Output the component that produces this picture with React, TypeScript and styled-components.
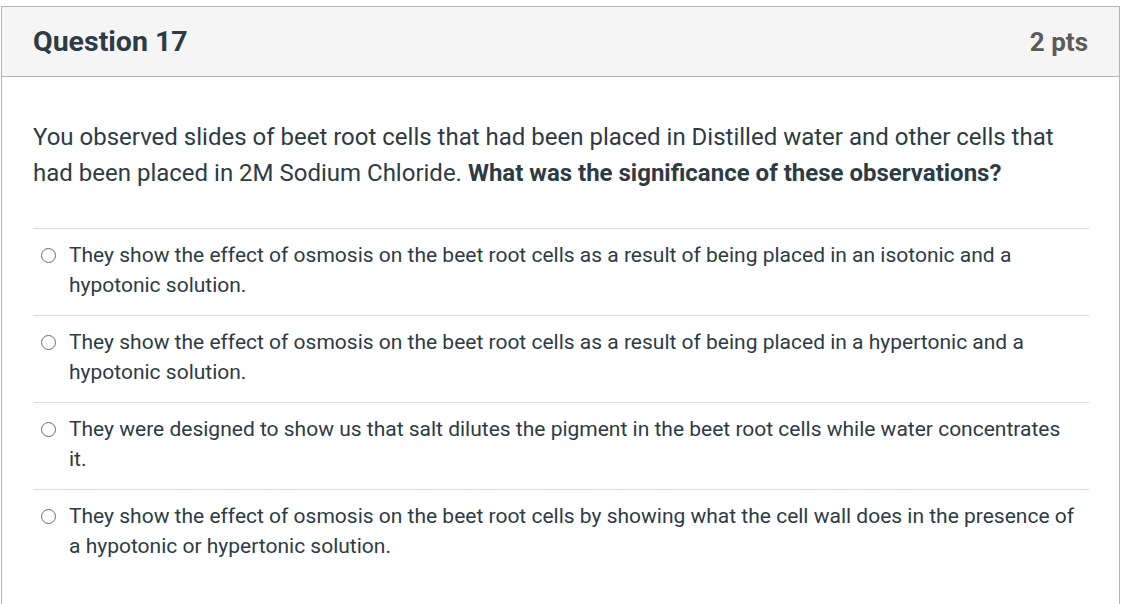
import styled, { createGlobalStyle } from 'styled-components';

const GlobalStyle = createGlobalStyle`
  html, body {
    margin: 0;
    padding: 0;
    background: #ffffff;
  }
  body {
    font-family: Roboto, "Noto Sans", "Liberation Sans", sans-serif;
    color: #2d3b45;
    overflow: hidden;
  }
`;

const Page = styled.div`
  padding: 6px 2px 0 1px;
`;

const Card = styled.div`
  border: 1px solid #b5b5b5;
  border-bottom: none;
  background: #ffffff;
`;

const Header = styled.div`
  display: flex;
  align-items: center;
  justify-content: space-between;
  height: 69px;
  padding: 0 31px;
  background: #f5f5f5;
  border-bottom: 1px solid #b5b5b5;
`;

const Title = styled.h2`
  margin: 0;
  font-size: 28.5px;
  font-weight: 700;
  color: #2d3b45;
`;

const Points = styled.div`
  font-size: 26px;
  font-weight: 700;
  color: #5b5b5b;
`;

const Body = styled.div`
  padding: 42px 30px 80px 31px;
`;

const QuestionText = styled.p`
  margin: 0 0 37px;
  font-size: 24px;
  line-height: 36px;
  color: #2d3b45;
`;

const Answers = styled.div`
  display: flex;
  flex-direction: column;
`;

const Answer = styled.label`
  display: flex;
  align-items: flex-start;
  gap: 13px;
  padding: 11px 10px 15px 8px;
  border-top: 1px solid #dcdcdc;
  font-size: 21px;
  line-height: 30px;
  color: #2d3b45;
  cursor: pointer;
`;

const Radio = styled.span`
  flex: none;
  width: 13px;
  height: 13px;
  margin-top: 8px;
  border: 1.5px solid #6b6b6b;
  border-radius: 50%;
  background: #ffffff;
`;

const answers = [
  'They show the effect of osmosis on the beet root cells as a result of being placed in an isotonic and a hypotonic solution.',
  'They show the effect of osmosis on the beet root cells as a result of being placed in a hypertonic and a hypotonic solution.',
  'They were designed to show us that salt dilutes the pigment in the beet root cells while water concentrates it.',
  'They show the effect of osmosis on the beet root cells by showing what the cell wall does in the presence of a hypotonic or hypertonic solution.',
];

export default function App() {
  return (
    <>
      <GlobalStyle />
      <Page>
        <Card>
          <Header>
            <Title>Question 17</Title>
            <Points>2 pts</Points>
          </Header>
          <Body>
            <QuestionText>
              You observed slides of beet root cells that had been placed in Distilled water and other cells
              that had been placed in 2M Sodium Chloride. <b>What was the significance of these observations?</b>
            </QuestionText>
            <Answers>
              {answers.map((text) => (
                <Answer key={text}>
                  <Radio />
                  <span>{text}</span>
                </Answer>
              ))}
            </Answers>
          </Body>
        </Card>
      </Page>
    </>
  );
}
